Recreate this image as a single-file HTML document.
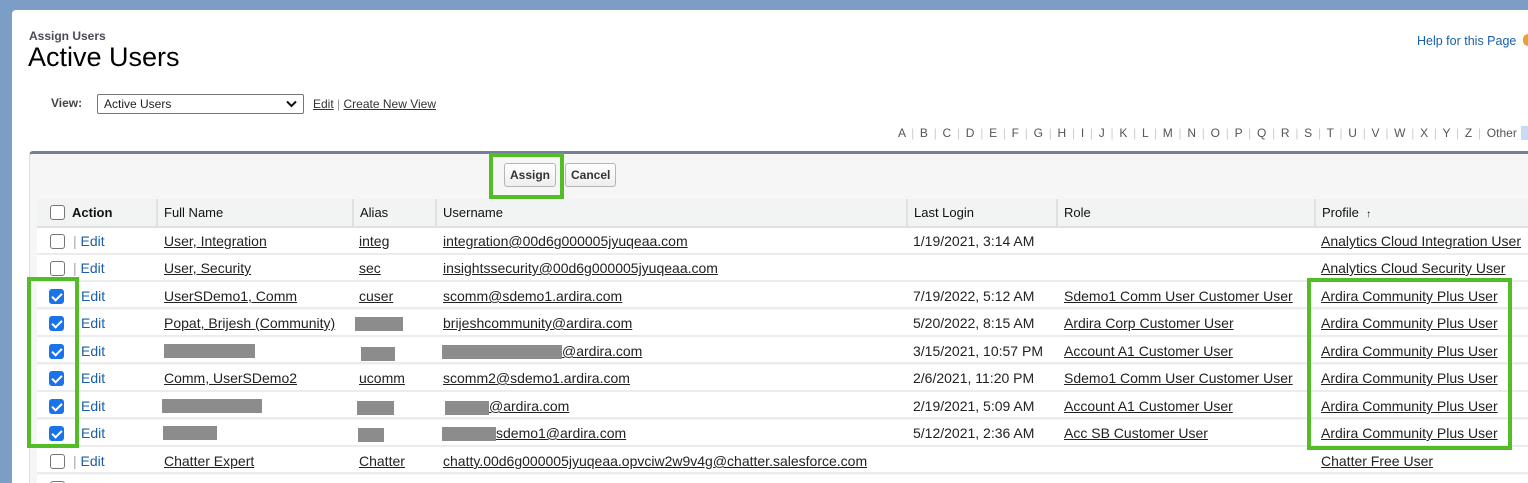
<!DOCTYPE html>
<html style="width:1528px;height:483px;overflow:hidden"><head><style>
*{margin:0;padding:0;box-sizing:border-box}
body{width:1528px;height:483px;overflow:hidden;background:#7b9dc6;font-family:"Liberation Sans",Arial,sans-serif;font-size:14px;color:#222;position:relative}
.a{position:absolute;white-space:nowrap}
u{text-decoration:underline}
.bl{color:#1a5fa8}
.panel{position:absolute;left:12px;top:10px;width:1530px;height:480px;background:#fff;border-radius:4px}
.tb{position:absolute;left:29px;top:151px;width:1510px;height:340px;background:#f6f6f6;border-top:3px solid #747e96;border-left:1px solid #ddd;border-radius:4px 0 0 0}
.cb{position:absolute;width:15px;height:15px;border:1px solid #767676;border-radius:3px;background:#fff}
.ck{position:absolute;width:15px;height:15px;border-radius:3px;background:#1a73e8}
.ck:after{content:"";position:absolute;left:5px;top:2px;width:4px;height:8px;border:solid #fff;border-width:0 2px 2px 0;transform:rotate(45deg)}
.red{position:absolute;background:#8c8c8c;height:14px}
.g{position:absolute;border:4px solid #52bd27}
.btn{position:absolute;border:1px solid #b5b5b5;border-radius:3px;background:linear-gradient(#fff,#eee);font-weight:bold;font-size:12px;color:#333;padding:4px 5px}
.hd{position:absolute;top:199px;height:29px;background:#f2f3f3;border-right:2px solid #e0e0e0;border-bottom:2px solid #e0e0e0;font-weight:normal;padding:6px 6px;color:#111;font-size:13px}
.row{position:absolute;left:37px;width:1500px;height:27px;background:#fff;border-bottom:2px solid #ececec}
</style></head><body>
<div class="panel"></div>
<div class="a" style="left:29px;top:29px;font-size:12px;font-weight:bold;color:#4a4a56">Assign Users</div>
<div class="a" style="left:28px;top:42px;font-size:27px;color:#000">Active Users</div>
<div class="a bl" style="left:1417px;top:34px;font-size:12.5px">Help for this Page</div>
<div class="a" style="left:1523px;top:34px;width:10px;height:12px;border-radius:6px;background:#e8a13a"></div>
<div class="a" style="left:51px;top:96px;font-weight:bold;font-size:12px;color:#444">View:</div>
<div class="a" style="left:97px;top:94px;width:207px;height:20px;border:1px solid #767676;border-radius:2px;font-size:12px;padding:2px 6px">Active Users<svg style="position:absolute;right:6px;top:5px" width="11" height="8" viewBox="0 0 11 8"><path d="M1 1.5l4.5 4.5 4.5-4.5" fill="none" stroke="#111" stroke-width="2"/></svg></div>
<div class="a" style="left:313px;top:97px;font-size:12px;color:#333"><u>Edit</u> <span style="color:#999">|</span> <u>Create New View</u></div>
<div class="a" style="left:898px;top:126px;font-size:12px;color:#555;word-spacing:2.4px">A <span style="color:#ccc">|</span> B <span style="color:#ccc">|</span> C <span style="color:#ccc">|</span> D <span style="color:#ccc">|</span> E <span style="color:#ccc">|</span> F <span style="color:#ccc">|</span> G <span style="color:#ccc">|</span> H <span style="color:#ccc">|</span> I <span style="color:#ccc">|</span> J <span style="color:#ccc">|</span> K <span style="color:#ccc">|</span> L <span style="color:#ccc">|</span> M <span style="color:#ccc">|</span> N <span style="color:#ccc">|</span> O <span style="color:#ccc">|</span> P <span style="color:#ccc">|</span> Q <span style="color:#ccc">|</span> R <span style="color:#ccc">|</span> S <span style="color:#ccc">|</span> T <span style="color:#ccc">|</span> U <span style="color:#ccc">|</span> V <span style="color:#ccc">|</span> W <span style="color:#ccc">|</span> X <span style="color:#ccc">|</span> Y <span style="color:#ccc">|</span> Z <span style="color:#ccc">|</span> Other</div>
<div class="a" style="left:1521px;top:126px;width:8px;height:14px;background:#c6dcf5"></div>
<div class="tb"></div>
<div class="btn" style="left:504px;top:163px">Assign</div>
<div class="btn" style="left:565px;top:163px">Cancel</div>

<div class="hd" style="left:37px;width:121px;padding-left:35px;font-weight:bold">Action</div>
<div class="cb" style="left:50px;top:205px"></div>
<div class="hd" style="left:158px;width:196px">Full Name</div>
<div class="hd" style="left:354px;width:83px">Alias</div>
<div class="hd" style="left:437px;width:471px">Username</div>
<div class="hd" style="left:908px;width:150px">Last Login</div>
<div class="hd" style="left:1058px;width:258px">Role</div>
<div class="hd" style="left:1316px;width:220px">Profile &nbsp;<span style="font-size:10px">&#x2191;</span></div>

<div class="row" style="top:228px"></div>
<div class="row" style="top:255px"></div>
<div class="row" style="top:282px"></div>
<div class="row" style="top:310px"></div>
<div class="row" style="top:337px"></div>
<div class="row" style="top:365px"></div>
<div class="row" style="top:392px"></div>
<div class="row" style="top:420px"></div>
<div class="row" style="top:447px"></div>
<div class="row" style="top:475px"></div>

<div class="cb" style="left:50px;top:234px"></div><div class="a bl" style="left:73px;top:233px"><span style="color:#aaa">|</span> Edit</div>
<div class="a" style="left:164px;top:233px"><u>User, Integration</u></div><div class="a" style="left:359px;top:233px"><u>integ</u></div><div class="a" style="left:443px;top:233px"><u>integration@00d6g000005jyuqeaa.com</u></div><div class="a" style="left:913px;top:233px">1/19/2021, 3:14 AM</div><div class="a" style="left:1321px;top:233px"><u>Analytics Cloud Integration User</u></div>

<div class="cb" style="left:50px;top:261px"></div><div class="a bl" style="left:73px;top:260px"><span style="color:#aaa">|</span> Edit</div>
<div class="a" style="left:164px;top:260px"><u>User, Security</u></div><div class="a" style="left:359px;top:260px"><u>sec</u></div><div class="a" style="left:443px;top:260px"><u>insightssecurity@00d6g000005jyuqeaa.com</u></div><div class="a" style="left:1321px;top:260px"><u>Analytics Cloud Security User</u></div>

<div class="ck" style="left:49px;top:289px"></div><div class="a bl" style="left:81px;top:288px">Edit</div>
<div class="a" style="left:164px;top:288px"><u>UserSDemo1, Comm</u></div><div class="a" style="left:359px;top:288px"><u>cuser</u></div><div class="a" style="left:443px;top:288px"><u>scomm@sdemo1.ardira.com</u></div><div class="a" style="left:913px;top:288px">7/19/2022, 5:12 AM</div><div class="a" style="left:1064px;top:288px"><u>Sdemo1 Comm User Customer User</u></div><div class="a" style="left:1321px;top:288px"><u>Ardira Community Plus User</u></div>

<div class="ck" style="left:49px;top:316px"></div><div class="a bl" style="left:81px;top:315px">Edit</div>
<div class="a" style="left:164px;top:315px"><u>Popat, Brijesh (Community)</u></div><div class="red" style="left:355px;top:317px;width:48px"></div><div class="a" style="left:443px;top:315px"><u>brijeshcommunity@ardira.com</u></div><div class="a" style="left:913px;top:315px">5/20/2022, 8:15 AM</div><div class="a" style="left:1064px;top:315px"><u>Ardira Corp Customer User</u></div><div class="a" style="left:1321px;top:315px"><u>Ardira Community Plus User</u></div>

<div class="ck" style="left:49px;top:344px"></div><div class="a bl" style="left:81px;top:343px">Edit</div>
<div class="red" style="left:164px;top:344px;width:91px"></div><div class="red" style="left:361px;top:347px;width:34px"></div><div class="red" style="left:442px;top:345px;width:120px"></div><div class="a" style="left:562px;top:343px"><u>@ardira.com</u></div><div class="a" style="left:913px;top:343px">3/15/2021, 10:57 PM</div><div class="a" style="left:1064px;top:343px"><u>Account A1 Customer User</u></div><div class="a" style="left:1321px;top:343px"><u>Ardira Community Plus User</u></div>

<div class="ck" style="left:49px;top:371px"></div><div class="a bl" style="left:81px;top:370px">Edit</div>
<div class="a" style="left:164px;top:370px"><u>Comm, UserSDemo2</u></div><div class="a" style="left:359px;top:370px"><u>ucomm</u></div><div class="a" style="left:443px;top:370px"><u>scomm2@sdemo1.ardira.com</u></div><div class="a" style="left:913px;top:370px">2/6/2021, 11:20 PM</div><div class="a" style="left:1064px;top:370px"><u>Sdemo1 Comm User Customer User</u></div><div class="a" style="left:1321px;top:370px"><u>Ardira Community Plus User</u></div>

<div class="ck" style="left:49px;top:399px"></div><div class="a bl" style="left:81px;top:398px">Edit</div>
<div class="red" style="left:162px;top:399px;width:100px"></div><div class="red" style="left:357px;top:401px;width:37px"></div><div class="red" style="left:445px;top:401px;width:44px"></div><div class="a" style="left:489px;top:398px"><u>@ardira.com</u></div><div class="a" style="left:913px;top:398px">2/19/2021, 5:09 AM</div><div class="a" style="left:1064px;top:398px"><u>Account A1 Customer User</u></div><div class="a" style="left:1321px;top:398px"><u>Ardira Community Plus User</u></div>

<div class="ck" style="left:49px;top:426px"></div><div class="a bl" style="left:81px;top:425px">Edit</div>
<div class="red" style="left:163px;top:426px;width:54px"></div><div class="red" style="left:358px;top:428px;width:26px"></div><div class="red" style="left:442px;top:427px;width:54px"></div><div class="a" style="left:496px;top:425px"><u>sdemo1@ardira.com</u></div><div class="a" style="left:913px;top:425px">5/12/2021, 2:36 AM</div><div class="a" style="left:1064px;top:425px"><u>Acc SB Customer User</u></div><div class="a" style="left:1321px;top:425px"><u>Ardira Community Plus User</u></div>

<div class="cb" style="left:50px;top:454px"></div><div class="a bl" style="left:73px;top:453px"><span style="color:#aaa">|</span> Edit</div>
<div class="a" style="left:164px;top:453px"><u>Chatter Expert</u></div><div class="a" style="left:359px;top:453px"><u>Chatter</u></div><div class="a" style="left:443px;top:453px"><u>chatty.00d6g000005jyuqeaa.opvciw2w9v4g@chatter.salesforce.com</u></div><div class="a" style="left:1321px;top:453px"><u>Chatter Free User</u></div>
<div class="cb" style="left:50px;top:481px"></div>

<div class="g" style="left:489px;top:153px;width:75px;height:46px"></div>
<div class="g" style="left:27px;top:277px;width:52px;height:171px"></div>
<div class="g" style="left:1307px;top:278px;width:205px;height:172px"></div>
</body></html>
